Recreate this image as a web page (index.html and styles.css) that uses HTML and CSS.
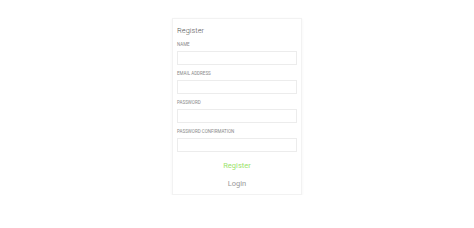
FILE: index.html
```html
<!DOCTYPE html>
<html lang="en">
<head>
    <meta charset="UTF-8">
    <meta name="viewport" content="width=device-width, initial-scale=1.0">
    <title>Register</title>
    <link rel="stylesheet" href="styles.css">
</head>
<body>
    <form class="card">
        <h1 class="title">Register</h1>

        <label class="field-label">Name</label>
        <input class="field" type="text" name="name">

        <label class="field-label">Email address</label>
        <input class="field" type="email" name="email">

        <label class="field-label">Password</label>
        <input class="field" type="password" name="password">

        <label class="field-label">Password confirmation</label>
        <input class="field" type="password" name="password_confirmation">

        <button class="btn btn-register" type="submit">Register</button>
        <button class="btn btn-login" type="button">Login</button>
    </form>
</body>
</html>
```

FILE: styles.css
```css
body {
    font-family: Roboto, "Noto Sans", sans-serif;
    background-color: #fff;
    margin: 0;
    padding: 0;
    display: flex;
    justify-content: center;
}
.card {
    width: 130px;
    box-sizing: border-box;
    margin-top: 18px;
    padding: 5px 4px 1px;
    background-color: #fff;
    border: 1px solid #f2f2f2;
    box-shadow: 0 1px 3px rgba(0, 0, 0, 0.05);
    display: flex;
    flex-direction: column;
}
.title {
    font-size: 7.5px;
    font-weight: 300;
    color: #555;
    margin: 2px 0 6px;
    line-height: 10px;
}
.field-label {
    display: block;
    font-size: 4.5px;
    text-transform: uppercase;
    color: #888;
    line-height: 6px;
    margin-bottom: 3px;
}
.field {
    width: 100%;
    height: 14px;
    box-sizing: border-box;
    border: 1px solid #ececec;
    margin: 0 0 6px;
    padding: 0 3px;
}
.btn {
    background: none;
    border: none;
    font-family: inherit;
    font-size: 7.5px;
    line-height: 10px;
    padding: 4px 0;
    cursor: pointer;
}
.btn-register {
    color: #9be36b;
    margin-top: -1px;
}
.btn-login {
    color: #999;
    margin-top: 0;
}
```
